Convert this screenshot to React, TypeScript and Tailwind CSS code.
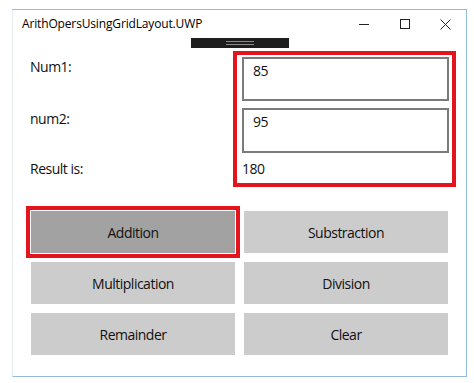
import React from "react";

const labels = ["Num1:", "num2:"];

function CaptionButtons() {
  return (
    <div className="ml-auto flex items-center h-full text-[#222]">
      <div className="w-[41px] flex justify-center">
        <svg width="10" height="10" viewBox="0 0 10 10">
          <path d="M0 5.5h10" stroke="currentColor" strokeWidth="1" />
        </svg>
      </div>
      <div className="w-[41px] flex justify-center">
        <svg width="10" height="10" viewBox="0 0 10 10">
          <rect x="0.5" y="0.5" width="9" height="9" fill="none" stroke="currentColor" strokeWidth="1" />
        </svg>
      </div>
      <div className="w-[41px] flex justify-center">
        <svg width="11" height="11" viewBox="0 0 11 11">
          <path d="M0.5 0.5l10 10M10.5 0.5l-10 10" stroke="currentColor" strokeWidth="1" />
        </svg>
      </div>
    </div>
  );
}

function OpButton({ label, active }: { label: string; active?: boolean }) {
  return (
    <button
      className={
        active
          ? "h-[42px] bg-[#a2a2a2] text-[14px] tracking-[-0.5px] text-[#111] outline-4 outline-[#e3141e] outline-offset-[1px]"
          : "h-[42px] bg-[#cccccc] text-[14px] tracking-[-0.5px] text-[#111]"
      }
    >
      {label}
    </button>
  );
}

export default function App() {
  return (
    <div className="w-[474px] h-[383px] bg-white overflow-hidden font-['Segoe_UI','Open_Sans',sans-serif]">
      <div className="ml-[12px] mt-[9px] w-[455px] h-[368px] border border-[#92bade] border-l-[#e2ecf5] flex flex-col">
        {/* title bar */}
        <div className="h-[28px] flex items-center pl-[9px]">
          <span className="text-[12px] text-black tracking-[-0.15px]">ArithOpersUsingGridLayout.UWP</span>
          <CaptionButtons />
        </div>

        {/* debug toolbar */}
        <div className="mx-auto w-[98px] h-[10px] bg-[#1e1e1e] flex items-center justify-center">
          <div className="w-[28px] h-[4px] border-y border-[#8a8a8a]" />
        </div>

        {/* inputs */}
        <div className="flex mt-[3px] text-[14px] tracking-[-0.5px] text-[#111]">
          <div className="w-[220px] pl-[17px] pt-[4px]">
            <div className="h-[46px] pt-[2px] leading-[20px]">{labels[0]}</div>
            <div className="h-[45px] mt-[7px] pt-[1px] leading-[20px]">{labels[1]}</div>
            <div className="h-[30px] flex items-center">Result is:</div>
          </div>
          <div className="w-[223px] border-4 border-[#e3141e] pl-[5px] pr-[3px] pt-[2px]">
            <div className="h-[44px] border-2 border-[#7b7b7b] pl-[9px] pt-[2px] leading-[20px]">85</div>
            <div className="h-[45px] mt-[7px] border-2 border-[#7b7b7b] pl-[9px] pt-[2px] leading-[20px]">95</div>
            <div className="h-[30px] flex items-center">180</div>
          </div>
        </div>

        {/* operations */}
        <div className="grid grid-cols-[204px_204px] gap-x-[9px] gap-y-[9px] pl-[18px] mt-[24px]">
          <OpButton label="Addition" active />
          <OpButton label="Substraction" />
          <OpButton label="Multiplication" />
          <OpButton label="Division" />
          <OpButton label="Remainder" />
          <OpButton label="Clear" />
        </div>
      </div>
    </div>
  );
}
